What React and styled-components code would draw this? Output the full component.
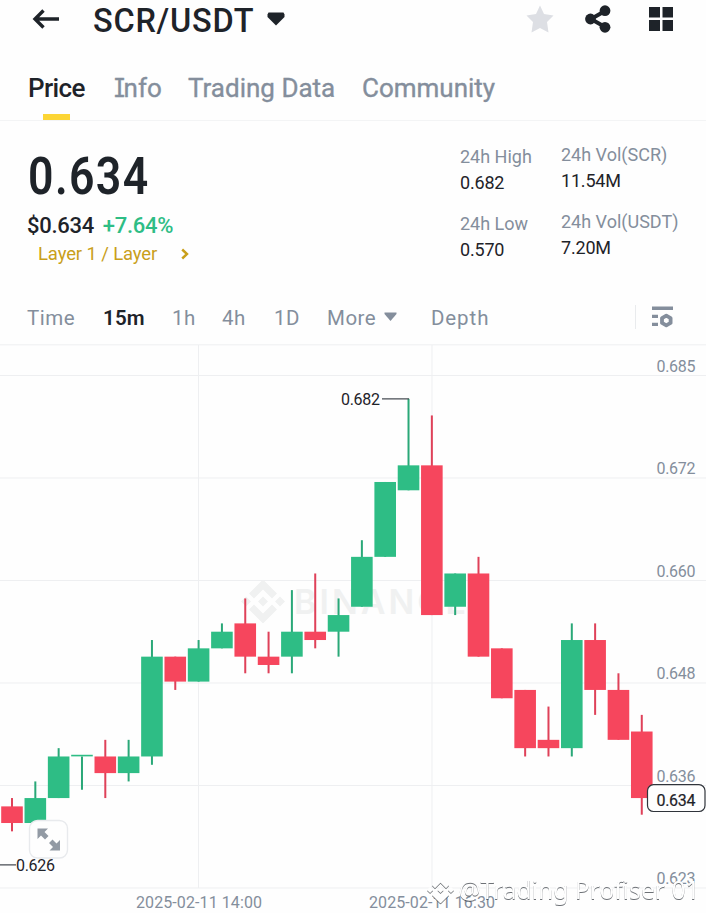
import React from 'react';
import styled, { createGlobalStyle } from 'styled-components';

const ink = '#1e2329';
const muted = '#848e9c';
const green = '#2ebd85';
const red = '#f6465d';
const gold = '#c99f1a';

const GlobalStyle = createGlobalStyle`
  * { box-sizing: border-box; }
  body {
    margin: 0;
    background: #fefefe;
    color: ${ink};
    font-family: Roboto, sans-serif;
  }
`;

const Page = styled.div`
  width: 706px;
  height: 913px;
  overflow: hidden;
  display: flex;
  flex-direction: column;
`;

const Header = styled.header`
  height: 40px;
  flex: none;
  display: flex;
  align-items: center;
  padding: 0 30px 2px 32px;

  svg { flex: none; display: block; }
`;

const Pair = styled.h1`
  margin: 0 13px 0 33px;
  width: 161px;
  font-size: 32.5px;
  font-weight: 500;
  line-height: 38px;
  padding-top: 3px;
  letter-spacing: 0.75px;
  white-space: nowrap;
`;

const HeaderActions = styled.div`
  margin-left: auto;
  display: flex;
  align-items: center;
  gap: 31px;
`;

const Tabs = styled.nav`
  height: 81px;
  flex: none;
  display: flex;
  padding: 33px 28px 0;
  border-bottom: 1px solid #f3f4f5;
`;

const Tab = styled.div`
  position: relative;
  width: ${(p) => p.$width}px;
  flex: none;
  font-size: 26px;
  font-weight: ${(p) => (p.$active ? 500 : 400)};
  line-height: 30px;
  letter-spacing: ${(p) => p.$spacing || 0}px;
  color: ${(p) => (p.$active ? ink : muted)};
  -webkit-text-stroke: ${(p) => (p.$active ? 0 : 0.35)}px ${muted};
  white-space: nowrap;

  &::after {
    content: '';
    display: ${(p) => (p.$active ? 'block' : 'none')};
    position: absolute;
    left: 15px;
    bottom: 0;
    width: 27px;
    height: 6px;
    background: #fcd535;
  }
`;

const SerifI = styled.span`
  font-family: Inter, sans-serif;
  font-feature-settings: 'cv08' 1;
  font-size: 25px;
  letter-spacing: -1.5px;
`;

const Summary = styled.section`
  height: 169px;
  flex: none;
  display: flex;
  padding: 0 0 0 28px;
`;

const PriceBlock = styled.div`
  width: 432px;
  padding-top: 28px;
`;

const LastPrice = styled.div`
  width: max-content;
  font-size: 51px;
  font-weight: 600;
  line-height: 56px;
  letter-spacing: 1.6px;
  transform: scaleX(0.875);
  transform-origin: left;
`;

const SubPrice = styled.div`
  display: flex;
  gap: 9px;
  margin: 8px 0 0 -1px;
  font-size: 22px;
  font-weight: 500;
  line-height: 26px;
  letter-spacing: -0.3px;
`;

const Change = styled.span`
  color: ${green};
`;

const Category = styled.div`
  display: flex;
  align-items: center;
  gap: 24px;
  margin: 3px 0 0 10px;
  color: ${gold};
  font-size: 18.5px;
  line-height: 24px;
  letter-spacing: -0.12px;
`;

const StatColumn = styled.div`
  width: ${(p) => p.$width}px;
  padding-top: ${(p) => p.$top}px;
  display: flex;
  flex-direction: column;
  gap: 15px;
`;

const Stat = styled.div`
  display: flex;
  flex-direction: column;
  gap: 2px;
  line-height: 25px;
  white-space: nowrap;
`;

const StatLabel = styled.span`
  color: ${muted};
  font-size: 18px;
`;

const StatValue = styled.span`
  line-height: 24.5px;
  font-size: 18px;
  letter-spacing: -0.2px;
`;

const Intervals = styled.div`
  height: 54px;
  flex: none;
  display: flex;
  align-items: flex-start;
  padding: 15px 0 0 27px;
  font-size: 20.5px;
  line-height: 27px;
`;

const Interval = styled.div`
  width: ${(p) => p.$width}px;
  flex: none;
  display: flex;
  align-items: center;
  gap: 8px;
  color: ${(p) => (p.$active ? ink : muted)};
  font-weight: ${(p) => (p.$active ? 600 : 400)};
  letter-spacing: ${(p) => p.$spacing ?? 0.5}px;

  svg { margin-top: -3px; }
`;

const Settings = styled.div`
  margin: 0 0 0 auto;
  width: 71px;
  height: 24px;
  padding-left: 15px;
  border-left: 1px solid #e9ebed;

  svg { display: block; }
`;

const ChartSvg = styled.svg`
  flex: none;
  display: block;
  font-family: Roboto, sans-serif;
`;

const Signature = styled.g`
  fill: #fefefe;
  filter: drop-shadow(0.9px 1px 0.3px rgba(60, 65, 72, 0.75));
`;

// [open, close, high, low] in thousandths, 15 minutes per candle
const candles = [
  [633, 631, 634, 630],
  [631, 634, 636, 631],
  [634, 639, 640, 634],
  [639, 639, 639, 635],
  [639, 637, 641, 634],
  [637, 639, 641, 636],
  [639, 651, 653, 638],
  [651, 648, 651, 647],
  [648, 652, 653, 648],
  [652, 654, 655, 652],
  [655, 651, 658, 649],
  [651, 650, 654, 649],
  [651, 654, 659, 649],
  [654, 653, 661, 652],
  [654, 656, 658, 651],
  [657, 663, 665, 657],
  [663, 672, 672, 663],
  [671, 674, 682, 671],
  [674, 656, 680, 656],
  [657, 661, 661, 656],
  [661, 651, 663, 651],
  [652, 646, 652, 646],
  [647, 640, 647, 639],
  [641, 640, 645, 639],
  [640, 653, 655, 639],
  [653, 647, 655, 644],
  [647, 641, 649, 641],
  [642, 634, 644, 632],
];

const gridLines = [
  { y: 375.5, label: '0.685' },
  { y: 478, label: '0.672' },
  { y: 580.5, label: '0.660' },
  { y: 683, label: '0.648' },
  { y: 785.5, label: '0.636' },
  { y: 888, label: '0.623' },
];

const toX = (i) => 12 + i * 23.325;
const toY = (price) => 398.8 + (682 - price) * 8.318;

const Candle = ({ index, data }) => {
  const [open, close, high, low] = data;
  const x = toX(index);
  const top = toY(Math.max(open, close));
  const height = Math.abs(open - close) * 8.318;
  const color = close >= open ? green : red;
  const wick = close >= open ? '#2aa878' : '#df4159';

  return (
    <g>
      <rect x={x - 1} y={toY(high)} width="2" height={toY(low) - toY(high)} fill={wick} />
      <rect
        x={x - 10.8}
        y={height ? top : top - 1.7}
        width="21.6"
        height={height || 1.6}
        fill={color}
      />
    </g>
  );
};

const BinanceMark = ({ x, y, size }) => (
  <svg x={x} y={y} width={size} height={size} viewBox="0 0 44 44">
    <path d="M22 0 36 14 31 19 22 10 13 19 8 14Z" />
    <path d="M22 44 36 30 31 25 22 34 13 25 8 30Z" />
    <path d="M5 17 10 22 5 27 0 22Z" />
    <path d="M39 17 44 22 39 27 34 22Z" />
    <path d="M22 17 27 22 22 27 17 22Z" />
  </svg>
);

const Chart = () => (
  <ChartSvg width="706" height="569" viewBox="0 344 706 569">
    <g stroke="#eeeff1" strokeWidth="1">
      <path d="M0 344.8H706" />
      {gridLines.map((line) => (
        <path key={line.label} d={`M0 ${line.y}H706`} />
      ))}
      <path d="M198.5 345V888M432 345V888" />
    </g>

    <g fill="#f0f1f1">
      <BinanceMark x={241} y={579.5} size={44} />
      <text x="294" y="614" fontSize="34" fontWeight="600" textLength="172" fontFamily="Inter, sans-serif">
        BINANCE
      </text>
    </g>

    {candles.map((data, i) => (
      <Candle key={i} index={i} data={data} />
    ))}

    <g fill={muted} fontSize="16">
      {gridLines.map((line) => (
        <text key={line.label} x="656.5" y={line.y - 3.6} textLength="39">
          {line.label}
        </text>
      ))}
      <text x="136" y="907.5" textLength="126">2025-02-11 14:00</text>
      <text x="369" y="907.5" textLength="126">2025-02-11 16:30</text>
    </g>

    <g fill={ink} fontSize="16">
      <text x="341" y="405" textLength="39">0.682</text>
      <text x="16" y="871" textLength="39">0.626</text>
    </g>
    <path d="M382 398.8H409M0 864.8H16" stroke="#484d54" strokeWidth="1.3" />

    <rect x="29.5" y="820.5" width="38" height="37.5" rx="8" fill="#fefefe" stroke="#e8eaed" strokeWidth="1.4" />
    <g fill="#929aa4">
      <path d="M37.5 828.5H48L44.5 832 48.5 836 45 839.5 41 835.5 37.5 839Z" />
      <path d="M60 850.5H49.5L53 847 49 843 52.5 839.5 56.5 843.5 60 840Z" />
    </g>

    <rect x="647.5" y="784.7" width="57.5" height="26.8" rx="6" fill="#fefefe" stroke="#30343b" strokeWidth="1.2" />
    <text x="656.5" y="806.3" fontSize="16" fill={ink} stroke={ink} strokeWidth="0.2" textLength="39">0.634</text>

    <Signature>
      <BinanceMark x={427} y={876.5} size={27} />
      <text x="458.5" y="898.5" fontSize="24.5" fontFamily="'Noto Sans', sans-serif" textLength="241">
        @Trading Profiser 01
      </text>
    </Signature>
  </ChartSvg>
);

const tabs = [
  { label: 'Price', width: 86, active: true, spacing: -0.6 },
  { label: 'Info', width: 74 },
  { label: 'Trading Data', width: 174 },
  { label: 'Community', width: 140 },
];

const intervals = [
  { label: 'Time', width: 76 },
  { label: '15m', width: 69, active: true, spacing: 0.2 },
  { label: '1h', width: 50 },
  { label: '4h', width: 52 },
  { label: '1D', width: 53 },
  { label: 'More', width: 104, menu: true },
  { label: 'Depth', width: 60, spacing: 0.9 },
];

const App = () => {
  return (
    <Page>
      <GlobalStyle />
      <Header>
        <svg width="28" height="22" viewBox="0 0 28 22" fill="none" stroke={ink} strokeWidth="3.4">
          <path d="M27 11H3M11.5 2.5L3 11L11.5 19.5" />
        </svg>
        <Pair>SCR/USDT</Pair>
        <svg width="18" height="14" viewBox="0 0 18 14" fill={ink}>
          <path d="M1.5 0.5H16.5L17.5 2.5V5L9 13.5L0.5 5V2.5Z" />
        </svg>
        <HeaderActions>
          <svg width="28" height="28" viewBox="0 0 28 28" fill="#dddfe4">
            <path d="M14 .5 18 9 27.5 10.5 21 17 22.5 27.5 14 23 5.5 27.5 7 17 .5 10.5 10 9Z" />
          </svg>
          <svg width="28" height="28" viewBox="1 0 28 28" fill={ink}>
            <path d="M21 6 7 14 21 22" fill="none" stroke={ink} strokeWidth="4" />
            <circle cx="6.5" cy="14" r="5.4" />
            <circle cx="21" cy="5.7" r="5.4" />
            <circle cx="21" cy="22.3" r="5.4" />
          </svg>
          <svg width="32" height="26" viewBox="0 0 32 26" fill={ink}>
            <path d="M5 1H16V11.5H5ZM18.5 1H29V11.5H18.5ZM5 14H16V25H5ZM18.5 14H29V25H18.5Z" />
          </svg>
        </HeaderActions>
      </Header>

      <Tabs>
        {tabs.map((tab) => (
          <Tab key={tab.label} $width={tab.width} $active={tab.active} $spacing={tab.spacing}>
            {tab.label === 'Info' ? <><SerifI>I</SerifI>nfo</> : tab.label}
          </Tab>
        ))}
      </Tabs>

      <Summary>
        <PriceBlock>
          <LastPrice>0.634</LastPrice>
          <SubPrice>
            <span>$0.634</span>
            <Change>+7.64%</Change>
          </SubPrice>
          <Category>
            Layer 1 / Layer
            <svg width="8" height="12" viewBox="0 0 8 12" fill="none" stroke={gold} strokeWidth="2.4">
              <path d="M1.2 1.5L6 6L1.2 10.5" />
            </svg>
          </Category>
        </PriceBlock>
        <StatColumn $width={101} $top={23}>
          <Stat>
            <StatLabel>24h High</StatLabel>
            <StatValue>0.682</StatValue>
          </Stat>
          <Stat>
            <StatLabel>24h Low</StatLabel>
            <StatValue>0.570</StatValue>
          </Stat>
        </StatColumn>
        <StatColumn $width={145} $top={21}>
          <Stat>
            <StatLabel>24h Vol(SCR)</StatLabel>
            <StatValue>11.54M</StatValue>
          </Stat>
          <Stat>
            <StatLabel>24h Vol(USDT)</StatLabel>
            <StatValue>7.20M</StatValue>
          </Stat>
        </StatColumn>
      </Summary>

      <Intervals>
        {intervals.map((item) => (
          <Interval key={item.label} $width={item.width} $active={item.active} $spacing={item.spacing}>
            {item.label}
            {item.menu && (
              <svg width="13" height="10" viewBox="0 0 13 10" fill={muted}>
                <path d="M.5 .5H12.5V2L6.5 9 .5 2Z" />
              </svg>
            )}
          </Interval>
        ))}
        <Settings>
          <svg width="23" height="23" viewBox="0 0 23 23" fill={muted}>
            <path d="M1 1.5H22V5H1ZM1 9.7H7V13H1ZM1 17.7H7V21H1Z" />
            <path
              d="M15.3 10.7 19.6 13.1V17.9L15.3 20.3 11 17.9V13.1Z"
              fill="none"
              stroke={muted}
              strokeWidth="3.8"
              strokeLinejoin="round"
            />
          </svg>
        </Settings>
      </Intervals>

      <Chart />
    </Page>
  );
};

export default App;
